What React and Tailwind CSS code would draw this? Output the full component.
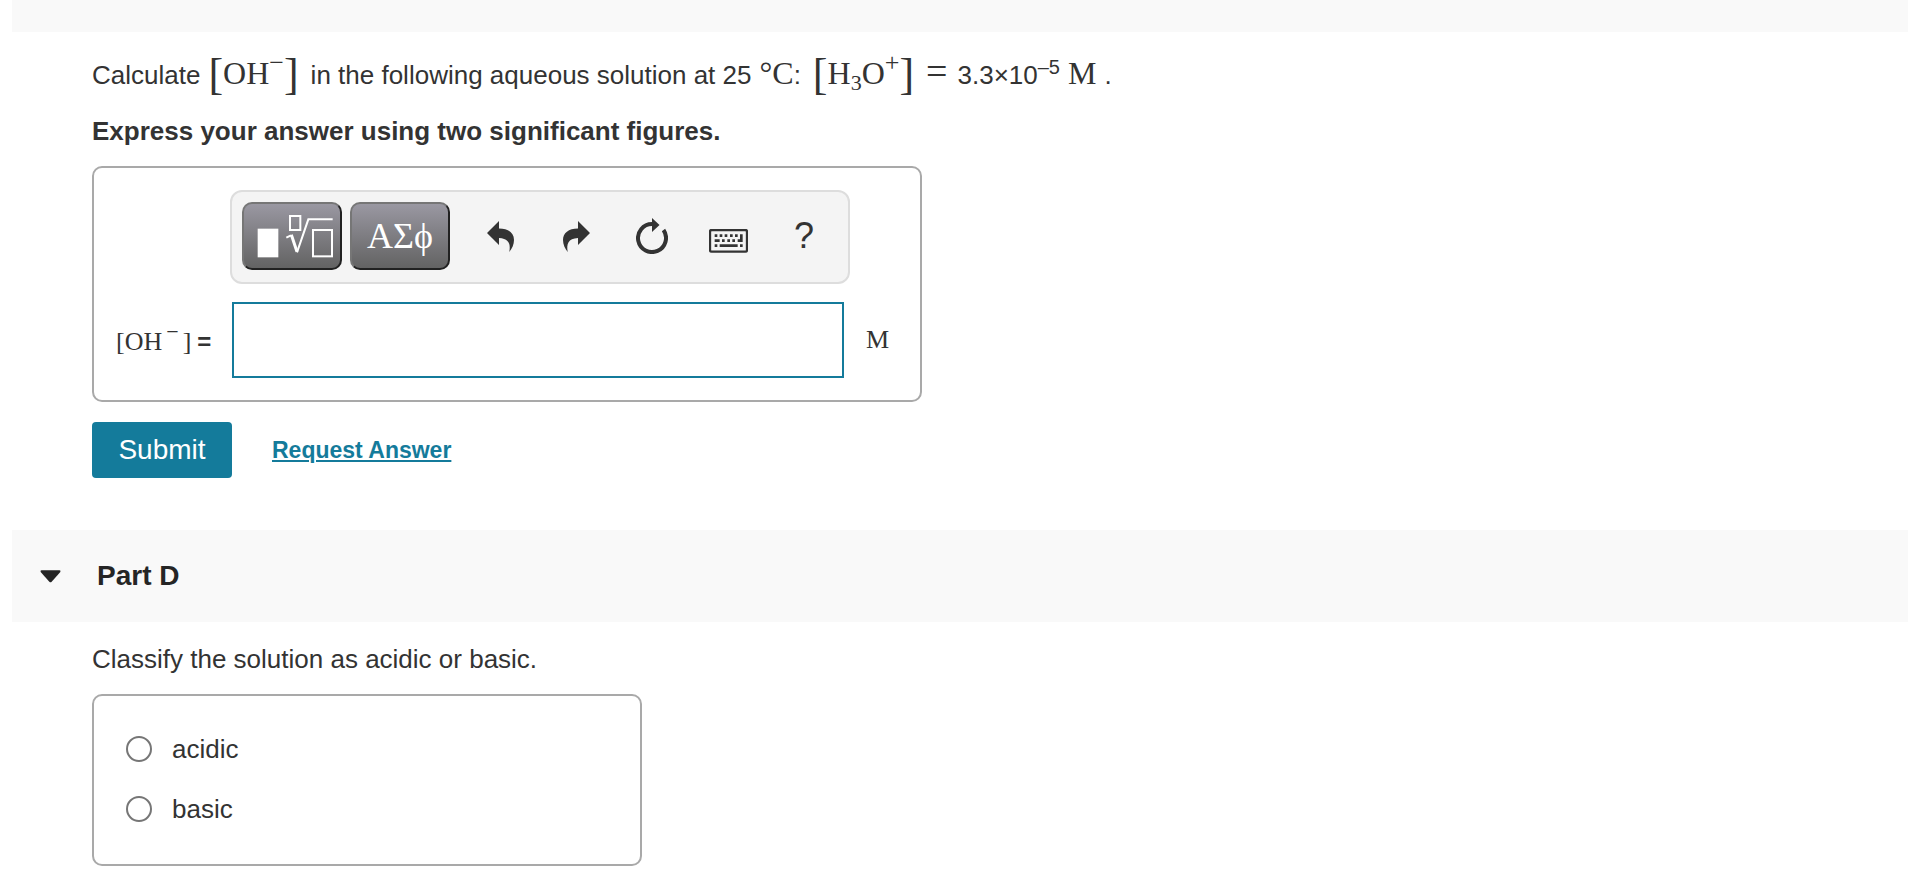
import React, { useState } from 'react';

function UndoIcon() {
  return (
    <svg width="27" height="31" viewBox="0 0 27 31" fill="currentColor" aria-hidden="true">
      <path d="M0 12 12 0v7.500C21.500 7.500 27 12 27 19c0 4.500-2 8.500-4.700 12C23.700 23 22 17.500 12 17v7z" />
    </svg>
  );
}

function RedoIcon() {
  return (
    <svg width="27" height="31" viewBox="0 0 27 31" fill="currentColor" aria-hidden="true">
      <path d="M27 12 15 0v7.500C5.500 7.500 0 12 0 19c0 4.500 2 8.500 4.700 12C3.300 23 5 17.500 15 17v7z" />
    </svg>
  );
}

function ResetIcon() {
  return (
    <svg width="32" height="36" viewBox="0 0 32 36" aria-hidden="true">
      <path d="M27.500 12A14 14 0 1 1 16 6" fill="none" stroke="currentColor" strokeWidth="4" />
      <path d="M16 0l7.500 7L16 14z" fill="currentColor" />
    </svg>
  );
}

function KeyboardIcon() {
  return (
    <svg width="39" height="24" viewBox="0 0 117 72" fill="currentColor" aria-hidden="true">
      <rect x="3" y="3" width="111" height="65" rx="5" fill="none" stroke="currentColor" strokeWidth="7" />
      <path d="M17 16h8v8h-8zM32 16h8v8h-8zM47 16h8v8h-8zM63 16h8v8h-8zM78 16h8v8h-8zM93 16h8v23H86v-8h7z" />
      <path d="M17 31h15v8H17zM39 31h8v8h-8zM55 31h8v8h-8zM70 31h8v8h-8z" />
      <path d="M17 46h8v8h-8zM32 46h54v8H32zM93 46h8v8h-8z" />
    </svg>
  );
}

function TemplatesIcon() {
  return (
    <svg width="77" height="44" viewBox="530 160 231 132" fill="none" stroke="white" strokeWidth="6" aria-hidden="true">
      <rect x="532" y="204" width="62" height="86" fill="white" stroke="none" />
      <rect x="629" y="166" width="31" height="42" />
      <path d="M618 231l14-7" />
      <path d="M633 222l17 51" strokeWidth="9" />
      <path d="M650 275l34-99h73" />
      <rect x="698" y="208" width="57" height="79" />
    </svg>
  );
}

// Tall square brackets that hang a little below the baseline
function Bracketed({ children }) {
  return (
    <span className='ml-2 font-["Liberation_Serif",serif] text-[32px]'>
      <span className="align-[-5px] text-[44px]">[</span>
      {children}
      <span className="align-[-5px] text-[44px]">]</span>
    </span>
  );
}

const tools = [
  { label: 'Undo', icon: <UndoIcon /> },
  { label: 'Redo', icon: <RedoIcon /> },
  { label: 'Reset', icon: <ResetIcon /> },
  { label: 'Keyboard shortcuts', icon: <KeyboardIcon />, className: 'pt-[10px]' },
  { label: 'Help', icon: <span className="text-[36px] leading-none">?</span> },
];

const menuButton =
  'flex h-[68px] w-[100px] items-center justify-center rounded-[10px] border-2 border-t-[#767676] border-l-[#767676] border-r-[#212121] border-b-[#212121] bg-linear-to-b from-[#9a98a2] to-[#636363] text-white';

export default function App() {
  const [answer, setAnswer] = useState('');
  const [choice, setChoice] = useState('');
  const [open, setOpen] = useState(true);

  return (
    <main className='pl-3 bg-white text-[#333] font-["Liberation_Sans",Arial,sans-serif] text-[26px] leading-[30px]'>
      <div className="h-8 bg-[#f9f9f9]" />

      {/* Part C */}
      <section className="px-20 pb-[52px]">
        <p className="min-h-[84px] pt-6">
          <span>Calculate</span>
          <Bracketed>
            OH<sup className="text-[26px]">−</sup>
          </Bracketed>
          <span className="ml-3">in the following aqueous solution at 25</span>
          <span className='ml-2 font-["Liberation_Serif",serif] text-[32px]'>°C</span>
          <span className="mr-1">:</span>
          <Bracketed>
            H<sub className="text-[22px]">3</sub>O<sup className="text-[26px]">+</sup>
          </Bracketed>
          <span className='ml-3 font-["Liberation_Serif",serif] text-[38px]'>=</span>
          <span className="ml-[10px]">3.3×10</span>
          <sup className="text-[20px]">–5</sup>
          <span className='ml-2 font-["Liberation_Serif",serif] text-[32px]'>M</span>
          <span className="ml-2">.</span>
        </p>
        <p className="font-bold">Express your answer using two significant figures.</p>

        <div className="mt-5 w-full max-w-[830px] rounded-[10px] border-2 border-[#a9a9a9] py-[22px]">
          <div className="pl-[136px] pr-[70px]">
            <div className="flex h-[94px] rounded-xl border-2 border-[#ddd] bg-[#f4f4f4] p-[10px]">
              <div className="flex gap-2">
                <button type="button" aria-label="Templates" className={`${menuButton} pl-[6px]`}>
                  <TemplatesIcon />
                </button>
                <button type="button" aria-label="Symbols" className={menuButton}>
                  <span className='font-["Liberation_Serif",serif] text-[36px] leading-none'>ΑΣϕ</span>
                </button>
              </div>
              <div className="ml-3 flex h-[68px]">
                {tools.map((tool) => (
                  <button
                    key={tool.label}
                    type="button"
                    aria-label={tool.label}
                    onClick={tool.label === 'Reset' ? () => setAnswer('') : undefined}
                    className={`flex w-[76px] items-center justify-center ${tool.className || ''}`}
                  >
                    {tool.icon}
                  </button>
                ))}
              </div>
            </div>
          </div>

          <div className="mt-[18px] grid grid-cols-[138px_1fr_76px] items-center">
            <label htmlFor="answer" className="flex items-baseline pl-[22px] pt-1">
              <span className='font-["Liberation_Serif",serif]'>
                [OH<sup className="mx-1 text-[22px]">−</sup>]
              </span>
              <span className="ml-[6px] text-[24px] font-bold">=</span>
            </label>
            <input
              id="answer"
              type="text"
              value={answer}
              onChange={(e) => setAnswer(e.target.value)}
              className="h-[76px] w-full border-2 border-[#147b9b] bg-white px-4 outline-none"
            />
            <span className='pl-[22px] font-["Liberation_Serif",serif]'>M</span>
          </div>
        </div>

        <div className="mt-5 flex items-center gap-10">
          <button type="button" className="h-14 w-[140px] rounded-sm bg-[#147b9b] text-[28px] text-white">
            Submit
          </button>
          <a href="#request" className="text-[23px] font-bold text-[#147b9b] underline decoration-2 underline-offset-2">
            Request Answer
          </a>
        </div>
      </section>

      {/* Part D */}
      <section>
        <h2 className="bg-[#f9f9f9] text-[28px] font-bold text-[#252525]">
          <button
            type="button"
            aria-expanded={open}
            onClick={() => setOpen(!open)}
            className="flex h-[92px] w-full items-center pl-7"
          >
            <svg width="21" height="13" viewBox="0 0 22 13" fill="currentColor" aria-hidden="true">
              <path d="M1.500 0h19q1.500 0 .8 1.800L12 12.200q-1 .9-2 0L.700 1.800Q0 0 1.500 0z" />
            </svg>
            <span className="ml-9">Part D</span>
          </button>
        </h2>

        {open && (
          <div className="px-20 pt-[22px]">
            <p>Classify the solution as acidic or basic.</p>
            <fieldset className="mt-5 flex h-[172px] w-full max-w-[550px] flex-col gap-[30px] rounded-[10px] border-2 border-[#a9a9a9] pl-8 pt-[38px]">
              {['acidic', 'basic'].map((option) => (
                <label key={option} className="flex items-center gap-5">
                  <input
                    type="radio"
                    name="classification"
                    value={option}
                    checked={choice === option}
                    onChange={() => setChoice(option)}
                    className="size-[26px] appearance-none rounded-full border-2 border-[#767676] bg-white checked:border-[8px] checked:border-[#147b9b]"
                  />
                  {option}
                </label>
              ))}
            </fieldset>
          </div>
        )}
      </section>
    </main>
  );
}
